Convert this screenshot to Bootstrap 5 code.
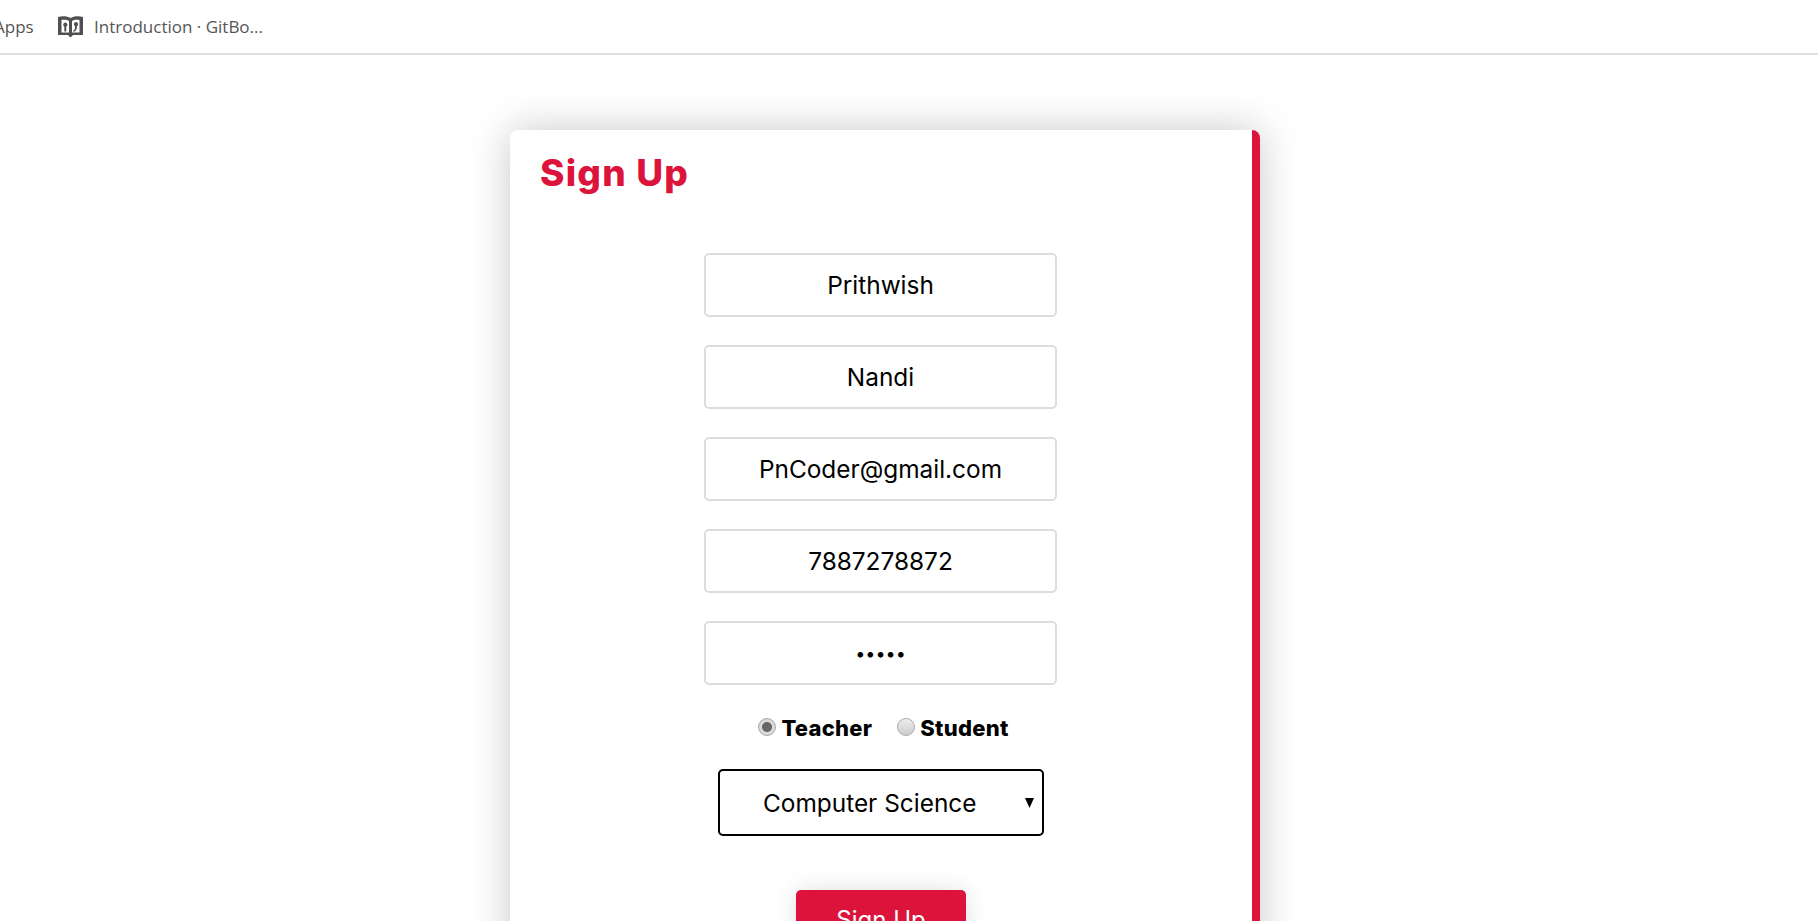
<!DOCTYPE html>
<html lang="en">
<head>
<meta charset="utf-8">
<title>Sign Up</title>
<link href="https://cdn.jsdelivr.net/npm/bootstrap@5.3.0/dist/css/bootstrap.min.css" rel="stylesheet">
<style>
html,body{height:921px;overflow:hidden;background:#fff;}
body{font-family:"Inter","Liberation Sans",sans-serif;color:#000;}
.bookbar{height:55px;border-bottom:2px solid #dedede;padding-left:0;color:#555;font-family:"Open Sans","Liberation Sans",sans-serif;font-size:17px;overflow:hidden;}
.bm-apps{margin-left:-6px;width:64px;flex:none;}
.bm-intro{gap:11px;}
.signup-panel{width:750px;margin:75px auto 0 510px;height:900px;background:#fff;border-right:8px solid #dc143c;border-radius:8px;box-shadow:0 0 40px rgba(0,0,0,.22);padding:21px 30px 0;}
.signup-title{font-family:"Inter",sans-serif;font-weight:800;font-size:37px;line-height:1.2;color:#dc143c;margin:0 0 58px;letter-spacing:1.2px;}
.signup-form{width:382px;margin-left:150px;}
.field-box.form-control{width:353px;height:64px;margin:0 0 28px 14px;border:2px solid #ddd;border-radius:5px;text-align:center;font-size:24.4px;color:#000;font-family:"Inter",sans-serif;padding:0 10px;box-shadow:none;}
.field-secret.form-control{font-size:18px;}
.role-row{height:35px;margin:-2px 0 0 5px;gap:25px;font-weight:800;font-size:22px;letter-spacing:.25px;font-family:"Inter",sans-serif;}
.role-radio{appearance:none;-webkit-appearance:none;width:18px;height:18px;border-radius:50%;border:1px solid #aaa;background:linear-gradient(#eee,#ccc);margin:0 5px 3px 0;flex:none;}
.role-radio:checked{background:radial-gradient(circle,#666 0 4.5px,#ddd 5.5px,#ccc 100%);}
.course-select.form-select{display:block;width:326px;height:67px;margin:23px auto 0;border:2px solid #000;border-radius:5px;font-size:24.4px;font-family:"Inter",sans-serif;color:#000;padding:0 30px 0 43px;box-shadow:none;background-position:right 4px center;background-size:16px 12px;background-image:url("data:image/svg+xml,%3Csvg xmlns='http://www.w3.org/2000/svg' viewBox='0 0 16 12'%3E%3Cpath d='M3 1h9L7.500 11z' fill='%23000'/%3E%3C/svg%3E");}
.submit-btn.btn{display:block;width:170px;height:60px;margin:54px auto 0;background:#dc143c;border:0;border-radius:5px;color:#fff;font-size:24px;font-family:"Inter",sans-serif;box-shadow:0 0 24px rgba(0,0,0,.12);padding:0;}
</style>
</head>
<body>
<nav class="bookbar d-flex align-items-center">
  <span class="bm-apps">Apps</span>
  <span class="bm-intro d-flex align-items-center">
    <svg width="25" height="22" viewBox="0 0 25 22" aria-hidden="true"><path d="M0 1 C4 0 9 0 12.500 2 C16 0 21 0 25 1 V19 H15 L12.500 21.500 L10 19 H0Z" fill="#505050"/><path d="M3.500 4 C6 3.500 9 3.500 11 5 V16.500 H3.500Z M14 5 C16 3.500 19 3.500 21.500 4 V16.500 H14Z" fill="#fff"/><path d="M7.300 6.500a2.200 2.200 0 0 1 1 4.100V15.500H6.300V10.600A2.200 2.200 0 0 1 7.300 6.500Z M18 6a2.200 2.200 0 0 1 1 4.100C19 13.500 18 15.500 15.500 16V14.500C17 14 17 12.500 17 10.100A2.200 2.200 0 0 1 18 6Z" fill="#505050"/></svg>
    <span>Introduction · GitBo...</span>
  </span>
</nav>
<main class="signup-panel">
  <h1 class="signup-title">Sign Up</h1>
  <form class="signup-form">
    <input class="form-control field-box" type="text" value="Prithwish">
    <input class="form-control field-box" type="text" value="Nandi">
    <input class="form-control field-box" type="email" value="PnCoder@gmail.com">
    <input class="form-control field-box" type="tel" value="7887278872">
    <input class="form-control field-box field-secret" type="password" value="12345">
    <div class="role-row d-flex justify-content-center align-items-center">
      <label class="d-flex align-items-center"><input class="role-radio" type="radio" name="role" checked>Teacher</label>
      <label class="d-flex align-items-center"><input class="role-radio" type="radio" name="role">Student</label>
    </div>
    <select class="form-select course-select"><option>Computer Science</option></select>
    <button class="btn submit-btn" type="button">Sign Up</button>
  </form>
</main>
<script src="https://cdn.jsdelivr.net/npm/bootstrap@5.3.0/dist/js/bootstrap.bundle.min.js"></script>
</body>
</html>
